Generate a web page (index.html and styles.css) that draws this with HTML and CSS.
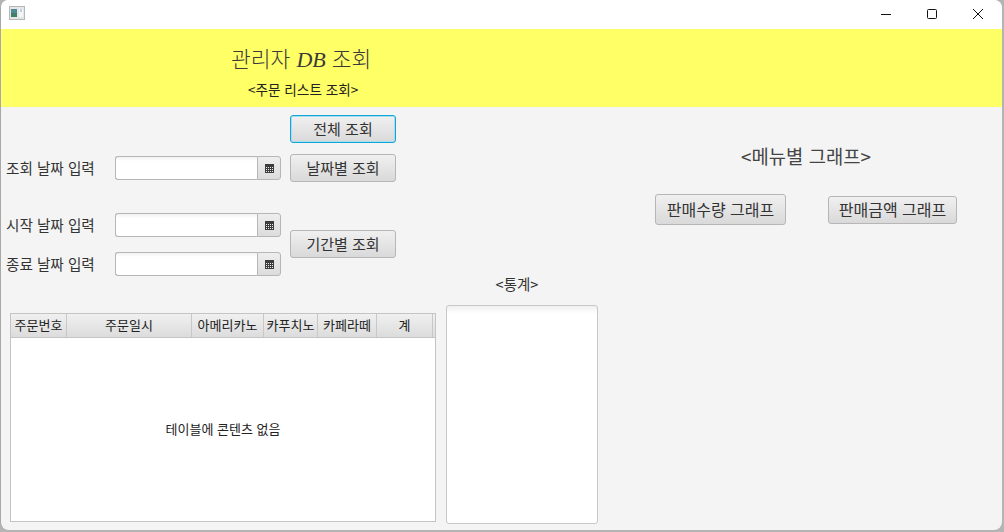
FILE: index.html
```html
<!DOCTYPE html>
<html lang="ko">

<head>
    <meta charset="UTF-8">
    <title>관리자 DB 조회</title>
    <link rel="stylesheet" href="styles.css">
</head>

<body>
    <div class="window">
        <div class="titlebar">
            <svg class="app-icon" width="16" height="14" viewBox="0 0 16 14">
                <rect x="0.5" y="0.5" width="15" height="13" fill="#e4e6e8" stroke="#b4b6b8"/>
                <rect x="2" y="3" width="6" height="8" fill="#4d8a94"/>
                <rect x="2" y="7" width="6" height="4" fill="#3f7f6a"/>
                <rect x="10" y="3" width="4" height="8" fill="#f3f5f6"/>
                <rect x="11" y="3" width="2" height="3" fill="#b9d2dc"/>
            </svg>
            <div class="win-controls">
                <svg width="12" height="12" viewBox="0 0 12 12"><path d="M1 6.5H11" stroke="#111" fill="none"/></svg>
                <svg width="12" height="12" viewBox="0 0 12 12"><rect x="1.5" y="1.5" width="9" height="9" rx="1" stroke="#111" fill="none"/></svg>
                <svg width="12" height="12" viewBox="0 0 12 12"><path d="M1 1L11 11M11 1L1 11" stroke="#111" fill="none"/></svg>
            </div>
        </div>

        <div class="banner">
            <h1 class="tit">관리자 <em>DB</em> 조회</h1>
            <p class="sub-tit">&lt;주문 리스트 조회&gt;</p>
        </div>

        <div class="main">
            <div class="left-col">
                <div class="query-btn-row">
                    <button class="btn btn-focus btn-query">전체 조회</button>
                </div>
                <div class="form-row">
                    <label class="date-label">조회 날짜 입력</label>
                    <div class="date-picker">
                        <input type="text" class="date-input">
                        <span class="date-btn">
                            <svg width="9" height="9" viewBox="0 0 9 9"><use href="#cal"/></svg>
                        </span>
                    </div>
                    <button class="btn btn-query">날짜별 조회</button>
                </div>
                <div class="range-group">
                    <div class="range-fields">
                        <div class="form-row">
                            <label class="date-label">시작 날짜 입력</label>
                            <div class="date-picker">
                                <input type="text" class="date-input">
                                <span class="date-btn">
                                    <svg width="9" height="9" viewBox="0 0 9 9"><use href="#cal"/></svg>
                                </span>
                            </div>
                        </div>
                        <div class="form-row">
                            <label class="date-label">종료 날짜 입력</label>
                            <div class="date-picker">
                                <input type="text" class="date-input">
                                <span class="date-btn">
                                    <svg width="9" height="9" viewBox="0 0 9 9"><use href="#cal"/></svg>
                                </span>
                            </div>
                        </div>
                    </div>
                    <button class="btn btn-query btn-range">기간별 조회</button>
                </div>

                <div class="order-table">
                    <div class="table-head">
                        <div class="th col-no">주문번호</div>
                        <div class="th col-date">주문일시</div>
                        <div class="th col-ame">아메리카노</div>
                        <div class="th col-cap">카푸치노</div>
                        <div class="th col-lat">카페라떼</div>
                        <div class="th col-sum">계</div>
                        <div class="th col-fill"></div>
                    </div>
                    <div class="table-empty">테이블에 콘텐츠 없음</div>
                </div>
            </div>

            <div class="mid-col">
                <div class="stat-title">&lt;통계&gt;</div>
                <div class="stat-list"></div>
            </div>

            <div class="right-col">
                <div class="graph-title">&lt;메뉴별 그래프&gt;</div>
                <div class="graph-btns">
                    <button class="btn btn-qty">판매수량 그래프</button>
                    <button class="btn btn-amt">판매금액 그래프</button>
                </div>
            </div>
        </div>
    </div>

    <svg width="0" height="0" class="defs">
        <defs>
            <g id="cal">
                <rect width="9" height="9" fill="#3c3c3c"/>
                <path d="M1 3.5H2M3 3.5H4M5 3.5H6M7 3.5H8M1 5.5H2M3 5.5H4M5 5.5H6M7 5.5H8M1 7.5H2M3 7.5H4M5 7.5H6M7 7.5H8" stroke="#eee"/>
            </g>
        </defs>
    </svg>
</body>

</html>
```

FILE: styles.css
```css
* {
    box-sizing: border-box;
}

html,
body {
    margin: 0;
    padding: 0;
    height: 532px;
    overflow: hidden;
}

body {
    background-color: #b4b4b4;
    font-family: "Noto Sans CJK KR", "Noto Sans", sans-serif;
    color: #333;
}

.defs {
    position: absolute;
}

.window {
    width: 1002px;
    height: 530px;
    background-color: #f4f4f4;
    border-left: 1px solid #a8a8a8;
    border-radius: 8px;
    overflow: hidden;
    display: flex;
    flex-direction: column;
}

.titlebar {
    height: 29px;
    flex: none;
    background-color: #fff;
    display: flex;
    align-items: center;
    justify-content: space-between;
    padding: 0 18px 3px 8px;
}

.app-icon {
    display: block;
}

.win-controls {
    display: flex;
    gap: 34px;
    padding-top: 2px;
}

.win-controls svg {
    display: block;
}

.banner {
    height: 78px;
    flex: none;
    background-color: #ffff66;
    padding: 15px 0 0 230px;
}

.tit {
    margin: 0;
    width: 142px;
    font-size: 21.5px;
    line-height: 28px;
    font-weight: 300;
    color: #3a3a3a;
    white-space: nowrap;
}

.tit em {
    font-family: "Liberation Serif", serif;
    font-size: 22px;
}

.sub-tit {
    margin: 6px 0 0 17px;
    font-size: 13.6px;
    line-height: 18px;
    color: #222;
    white-space: nowrap;
}

.main {
    flex: 1;
    display: flex;
    align-items: flex-start;
}

.left-col {
    width: 445px;
    flex: none;
}

.query-btn-row {
    padding: 8px 0 0 289px;
}

.btn {
    height: 28px;
    padding: 0 0 2px;
    background: linear-gradient(#f0f0f0, #d9d9d9);
    border: 1px solid #b6b6b6;
    border-radius: 3px;
    font-family: inherit;
    font-size: 15px;
    color: #333;
    cursor: pointer;
}

.btn-query {
    width: 106px;
}

.btn-range {
    margin-bottom: 1px;
}

.btn-focus {
    border: 1px solid #12a5d8;
    box-shadow: inset 0 0 0 1px #a8dcef;
}

.form-row {
    display: flex;
    align-items: center;
    padding-left: 5px;
}

.left-col > .form-row {
    margin-top: 11px;
    height: 28px;
}

.date-label {
    width: 109px;
    font-size: 14.6px;
    line-height: 20px;
    white-space: nowrap;
}

.date-picker {
    width: 166px;
    height: 24px;
    display: flex;
    margin-right: 9px;
    flex: none;
}

.date-input {
    width: 142px;
    height: 24px;
    background: linear-gradient(#f1f1f1, #fff 4px);
    border: 1px solid #b6b6b6;
    border-right: none;
    border-radius: 3px 0 0 3px;
    outline: none;
}

.date-btn {
    width: 24px;
    height: 24px;
    background: linear-gradient(#eeeeee, #dcdcdc);
    border: 1px solid #b6b6b6;
    border-radius: 0 3px 3px 0;
    display: flex;
    align-items: center;
    justify-content: center;
}

.range-group {
    display: flex;
    align-items: center;
    margin-top: 31px;
}

.range-fields {
    display: flex;
    flex-direction: column;
    gap: 15px;
}

.order-table {
    width: 426px;
    height: 209px;
    margin: 37px 0 0 9px;
    background-color: #fff;
    border: 1px solid #c4c4c4;
    display: flex;
    flex-direction: column;
}

.table-head {
    height: 24px;
    flex: none;
    display: flex;
    background: linear-gradient(#f0f0f0, #dcdcdc);
    border-bottom: 1px solid #c4c4c4;
}

.th {
    border-right: 1px solid #c8c8c8;
    font-size: 13px;
    line-height: 22px;
    text-align: center;
    white-space: nowrap;
    color: #222;
}

.col-no { width: 56px; }
.col-date { width: 125px; }
.col-ame { width: 72px; }
.col-cap { width: 54px; }
.col-lat { width: 59px; }
.col-sum { width: 56px; }
.col-fill { flex: 1; border-right: none; }

.table-empty {
    flex: 1;
    display: flex;
    align-items: center;
    justify-content: center;
    padding-bottom: 2px;
    font-size: 13px;
    color: #222;
}

.mid-col {
    width: 152px;
    flex: none;
}

.stat-title {
    margin-top: 167px;
    padding-right: 10px;
    font-size: 14.5px;
    line-height: 20px;
    text-align: center;
}

.stat-list {
    height: 219px;
    margin-top: 11px;
    background: linear-gradient(#f0f0f0, #fff 8px);
    border: 1px solid #c8c8c8;
    border-radius: 3px;
}

.right-col {
    flex: 1;
}

.graph-title {
    margin-top: 37px;
    padding-left: 12px;
    font-size: 18.8px;
    line-height: 24px;
    text-align: center;
    color: #444;
}

.graph-btns {
    display: flex;
    align-items: center;
    gap: 42px;
    margin-top: 26px;
    padding-left: 57px;
}

.btn-qty {
    width: 131px;
    height: 31px;
    font-size: 16px;
}

.btn-amt {
    width: 129px;
    font-size: 16px;
}
```
